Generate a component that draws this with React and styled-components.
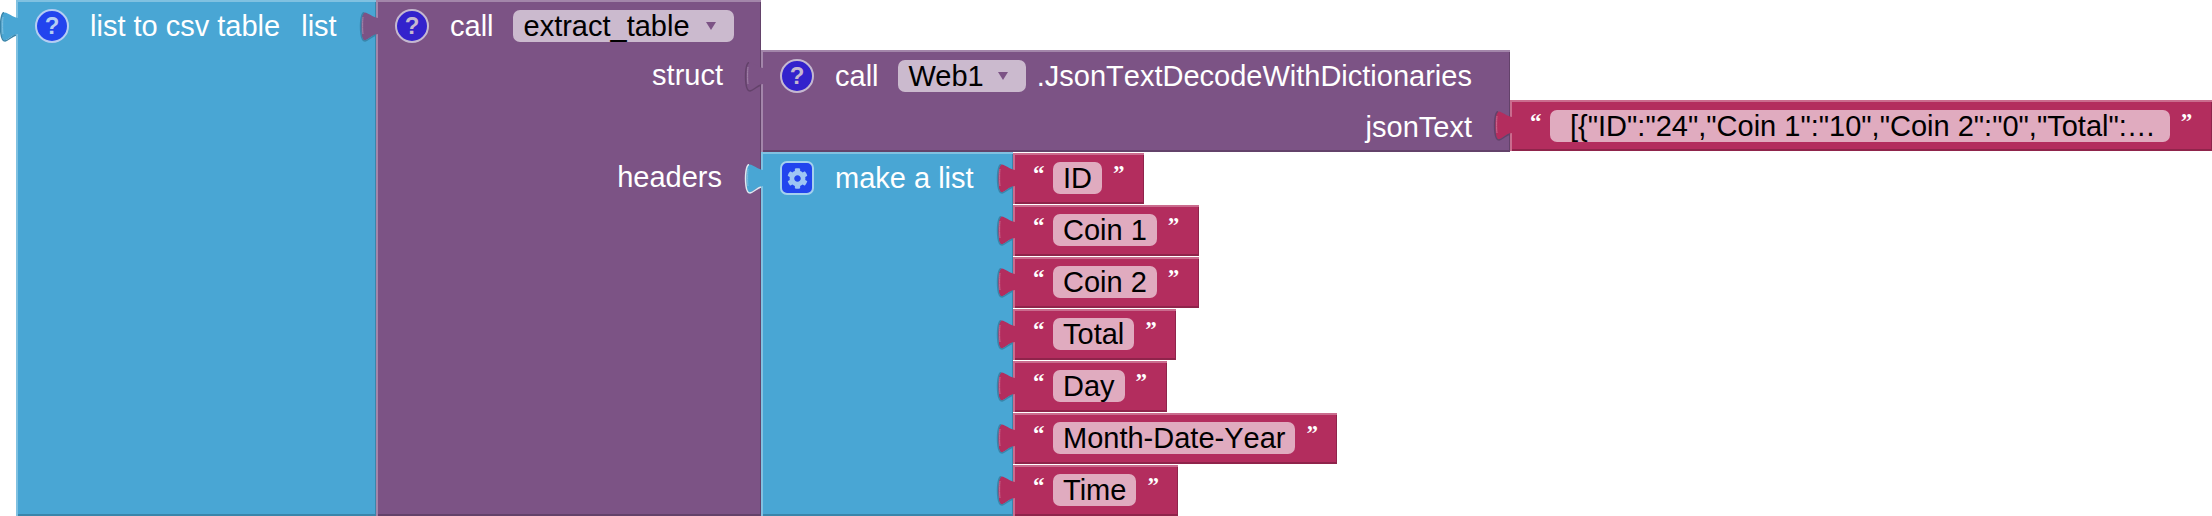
import styled, { createGlobalStyle } from 'styled-components';
import { FaCog } from 'react-icons/fa';

const BLUE = { fill: '#49a6d4', light: '#80c1e1', dark: '#3a85aa' };
const PURPLE = { fill: '#7c5385', light: '#a386aa', dark: '#63426a' };
const CRIMSON = { fill: '#b32d5e', light: '#ca6c8e', dark: '#8f244b' };

const GlobalStyle = createGlobalStyle`
  html, body {
    margin: 0;
    background: #fff;
    font-family: "Liberation Sans", Arial, sans-serif;
  }
`;

const Workspace = styled.div`
  display: flex;
  align-items: flex-start;
  width: 2212px;
  height: 516px;
  padding-left: 16px;
  box-sizing: border-box;
  overflow: hidden;
`;

const Body = styled.div`
  position: relative;
  box-sizing: border-box;
  flex: none;
  background: ${(p) => p.$tone.fill};
  box-shadow: inset 2px 2px 0 ${(p) => p.$tone.light}, inset -1px -2px 0 ${(p) => p.$tone.dark};
`;

const ListBody = styled(Body)`
  width: 360px;
  height: 516px;
`;

const CallBody = styled(Body)`
  width: 385px;
  height: 516px;
`;

const DecodeBody = styled(Body)`
  width: 749px;
  height: 102px;
`;

const MakeListBody = styled(Body)`
  width: 252px;
  height: 364px;
`;

const Row = styled.div`
  display: flex;
  align-items: center;
  height: 52px;
  padding-left: 19px;
  color: #fff;
  font-size: 29px;
  white-space: pre;
`;

const InputRow = styled.div`
  height: ${(p) => p.$height}px;
  padding-right: ${(p) => p.$right}px;
  color: #fff;
  font-size: 29px;
  line-height: 50px;
  text-align: right;
`;

const StructRow = styled(InputRow)`
  margin-top: -2px;
`;

const Label = styled.span`
  margin-left: ${(p) => p.$left || 0}px;
  font-kerning: ${(p) => (p.$plain ? 'none' : 'auto')};
`;

const HelpIcon = styled.span`
  flex: none;
  display: flex;
  align-items: center;
  justify-content: center;
  box-sizing: border-box;
  width: 34px;
  height: 34px;
  border: 2px solid ${(p) => p.$ring};
  border-radius: 50%;
  background: ${(p) => p.$fill};
  color: ${(p) => p.$ring};
  font-size: 24px;
  font-weight: 700;
`;

const MutatorIcon = styled.span`
  flex: none;
  display: flex;
  align-items: center;
  justify-content: center;
  box-sizing: border-box;
  width: 34px;
  height: 34px;
  border: 2px solid #a4d0ee;
  border-radius: 7px;
  background: #2244ee;
  color: #9fc6f4;
  font-size: 21px;
`;

const Dropdown = styled.span`
  display: flex;
  align-items: center;
  height: 32px;
  margin-left: 19px;
  padding: 0 18px 0 11px;
  border-radius: 7px;
  background: #cbbace;
  color: #000;
`;

const Arrow = styled.span`
  width: 0;
  height: 0;
  margin-left: ${(p) => p.$gap}px;
  border-left: 5px solid transparent;
  border-right: 5px solid transparent;
  border-top: 8px solid ${PURPLE.fill};
`;

const DecodeRow = styled.div`
  display: flex;
  align-items: flex-start;
`;

const Inputs = styled.div`
  display: flex;
  flex-direction: column;
  padding-top: 50px;
`;

const ListRow = styled.div`
  display: flex;
  align-items: flex-start;
`;

const Items = styled.div`
  display: flex;
  flex-direction: column;
  align-items: flex-start;
  padding-top: 1px;
`;

const TextBlock = styled(Body)`
  display: flex;
  align-items: flex-start;
  height: 51px;
  margin-bottom: 1px;
  margin-top: ${(p) => p.$top || 0}px;
  padding: ${(p) => (p.$top ? 10 : 9)}px 22px 0 20px;
  color: #fff;
  font-size: 29px;
`;

const Quote = styled.span`
  flex: none;
  width: 9px;
  height: 32px;
  margin-${(p) => (p.$open ? 'right' : 'left')}: 11px;
  color: #fff;
  font-family: "Liberation Serif", serif;
  font-size: 23px;
  font-weight: 700;
  line-height: 24px;
`;

const TextField = styled.span`
  height: 32px;
  padding: 0 ${(p) => (p.$wide ? '14px 0 20px' : '10px')};
  border-radius: 7px;
  background: #e0abbf;
  color: #000;
  font-kerning: ${(p) => (p.$plain ? 'none' : 'auto')};
  line-height: 32px;
  white-space: pre;
`;

const TabSvg = styled.svg`
  position: absolute;
  left: -17px;
  top: ${(p) => p.$top}px;
  z-index: 1;
`;

function Tab({ tone, edge, top = 12 }) {
  return (
    <TabSvg width="19" height="30" viewBox="0 0 19 30" $top={top}>
      <path
        d="M19 6C13 5 10 1 5.5 0.5C3.5 0.5 3 4 2.5 7C2 11 2 18 2.5 22C3 26 4 28.5 6 28.5C10 27 13 23 19 22Z"
        fill={tone.fill}
      />
      <path
        d="M5 0.5C3 1 2.5 4 2 7C1.5 11 1.5 18 2 22C2.5 26 3.5 29 6 29C10 28 13 24 17 23"
        fill="none"
        stroke={edge}
        strokeWidth="1.5"
      />
      <path
        d="M4 5C3.6 8 3.4 18 4 22"
        fill="none"
        stroke={tone.light}
        strokeWidth="1"
      />
    </TabSvg>
  );
}

function StringBlock({ text, top, wide, plain }) {
  return (
    <TextBlock $tone={CRIMSON} $top={top}>
      <Tab tone={CRIMSON} edge={top ? PURPLE.dark : BLUE.dark} top={11} />
      <Quote $open>“</Quote>
      <TextField $wide={wide} $plain={plain}>{text}</TextField>
      <Quote>”</Quote>
    </TextBlock>
  );
}

const headers = ['ID', 'Coin 1', 'Coin 2', 'Total', 'Day', 'Month-Date-Year', 'Time'];

export default function App() {
  return (
    <>
      <GlobalStyle />
      <Workspace>
        <ListBody $tone={BLUE}>
          <Tab tone={BLUE} edge={BLUE.dark} />
          <Row>
            <HelpIcon $fill="#2244ee" $ring="#b5cdf3">?</HelpIcon>
            <Label $left={21}>list to csv table</Label>
            <Label $left={21}>list</Label>
          </Row>
        </ListBody>

        <CallBody $tone={PURPLE}>
          <Tab tone={PURPLE} edge={BLUE.dark} />
          <Row>
            <HelpIcon $fill="#3322cc" $ring="#c5b8d0">?</HelpIcon>
            <Label $left={21}>call</Label>
            <Dropdown>
              extract_table
              <Arrow $gap={16} />
            </Dropdown>
          </Row>
          <StructRow $height={102} $right={38}>struct</StructRow>
          <InputRow $height={100} $right={39}>headers</InputRow>
        </CallBody>

        <Inputs>
          <DecodeRow>
            <DecodeBody $tone={PURPLE}>
              <Tab tone={PURPLE} edge={PURPLE.dark} />
              <Row>
                <HelpIcon $fill="#3322cc" $ring="#c5b8d0">?</HelpIcon>
                <Label $left={21}>call</Label>
                <Dropdown>
                  Web1
                  <Arrow $gap={14} />
                </Dropdown>
                <Label $left={11} $plain>.JsonTextDecodeWithDictionaries</Label>
              </Row>
              <InputRow $height={50} $right={38}>jsonText</InputRow>
            </DecodeBody>
            <StringBlock text={'[{"ID":"24","Coin 1":"10","Coin 2":"0","Total":…'} top={50} wide />
          </DecodeRow>

          <ListRow>
            <MakeListBody $tone={BLUE}>
              <Tab tone={BLUE} edge="#dfeaf2" />
              <Row>
                <MutatorIcon><FaCog /></MutatorIcon>
                <Label $left={21}>make a list</Label>
              </Row>
            </MakeListBody>
            <Items>
              {headers.map((h) => (
                <StringBlock key={h} text={h} plain={h === 'Month-Date-Year'} />
              ))}
            </Items>
          </ListRow>
        </Inputs>
      </Workspace>
    </>
  );
}
